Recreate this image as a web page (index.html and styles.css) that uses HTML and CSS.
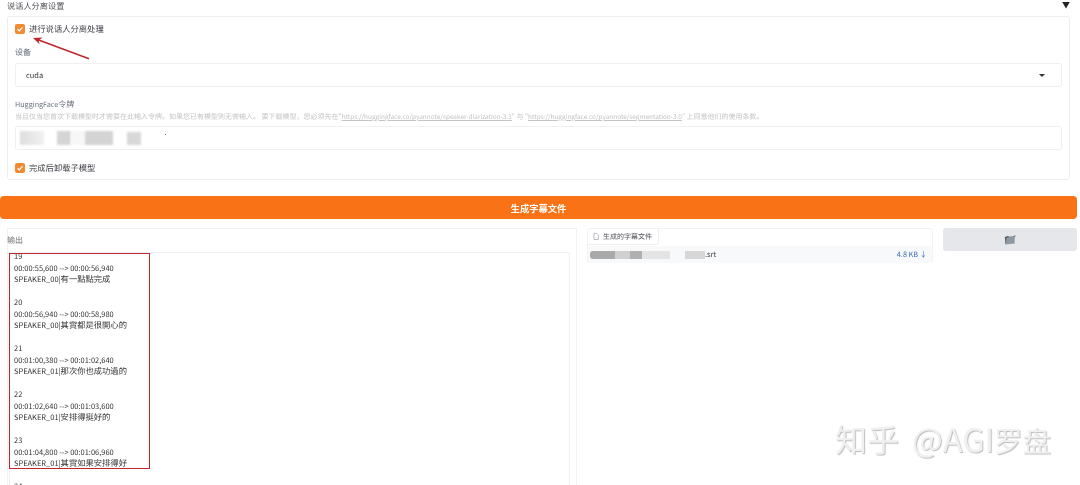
FILE: index.html
```html
<!DOCTYPE html>
<html lang="zh">
<head>
<meta charset="utf-8">
<title>生成字幕文件</title>
<link rel="stylesheet" href="styles.css">
</head>
<body>
<div class="page">
  <div class="acc-head"><span>说话人分离设置</span><span class="acc-arrow">▼</span></div>
  <section class="settings">
    <label class="check"><span class="box"><svg viewBox="0 0 10 10"><path d="M2.6 5.2 4.3 6.9 7.5 3.4"/></svg></span>进行说话人分离处理</label>
    <div class="field-label device-label">设备</div>
    <div class="select"><span class="lat">cuda</span><span class="caret"></span></div>
    <div class="field-label token-label"><span class="lat">HuggingFace</span>令牌</div>
    <div class="hint">当且仅当您首次下载模型时才需要在此输入令牌。如果您已有模型则无需输入。 要下载模型，您必须先在<span class="lat url">"<u>https://huggingface.co/pyannote/speaker-diarization-3.1</u>"</span> 与 <span class="lat url">"<u>https://huggingface.co/pyannote/segmentation-3.0</u>"</span> 上同意他们的使用条款。</div>
    <div class="token-input">
      <i class="m m1"></i><i class="m m2"></i><i class="m m3"></i><i class="m m4"></i><i class="m m5"></i><i class="dot"></i>
    </div>
    <label class="check check-last"><span class="box"><svg viewBox="0 0 10 10"><path d="M2.6 5.2 4.3 6.9 7.5 3.4"/></svg></span>完成后卸载子模型</label>
  </section>
  <button class="primary">生成字幕文件</button>
  <div class="columns">
    <section class="output">
      <div class="output-label">输出</div>
      <div class="textarea">
        <div class="cue first"><span class="lat">19<br>00:00:55,600 --&gt; 00:00:56,940<br>SPEAKER_00|</span>有一點點完成</div>
        <div class="cue"><span class="lat">20<br>00:00:56,940 --&gt; 00:00:58,980<br>SPEAKER_00|</span>其實都是很開心的</div>
        <div class="cue"><span class="lat">21<br>00:01:00,380 --&gt; 00:01:02,640<br>SPEAKER_01|</span>那次你也成功過的</div>
        <div class="cue"><span class="lat">22<br>00:01:02,640 --&gt; 00:01:03,600<br>SPEAKER_01|</span>安排得挺好的</div>
        <div class="cue"><span class="lat">23<br>00:01:04,800 --&gt; 00:01:06,960<br>SPEAKER_01|</span>其實如果安排得好</div>
        <div class="cue"><span class="lat">24</span></div>
      </div>
    </section>
    <section class="files">
      <div class="tab"><svg viewBox="0 0 10 10"><path d="M2.5 1.2H6L8 3.2V8.8H2.5Z"/></svg>生成的字幕文件</div>
      <div class="file-row">
        <span class="fname"><i class="f f1"></i><i class="f f2"></i><i class="f f3"></i><i class="f f4"></i><i class="f f5"></i><span class="lat">.srt</span></span>
        <span class="fsize">4.8 KB ↓</span>
      </div>
    </section>
    <button class="folder" aria-label="打开文件夹"><svg viewBox="0 0 14 12"><path class="front" d="M2.4 3.4 11.8 2.8 11.6 9.4 2.2 10.4Z"/><path class="back" d="M2.8 10.4 1.8 3 5 2 6 2.8 9.6 2.4 12.4 1.2 12.4 2.6 3.4 3.8Z"/></svg></button>
  </div>
  <div class="redbox"></div>
  <svg class="pointer" viewBox="0 0 62 27"><path class="line" d="M59 23.8 8 4.8"/><path class="head" d="M3 3 12.5 2.4 8.6 5.6 9.6 9.2Z"/></svg>
  <div class="mark"><span class="mark-a">知乎</span><span class="mark-b">@AGI</span><span class="mark-c">罗盘</span></div>
</div>
</body>
</html>
```
FILE: styles.css
```css
* { box-sizing: border-box; }
html, body { margin: 0; height: 485px; overflow: hidden; background: #fff; }
body { font-family: "Noto Sans CJK SC", "Noto Sans", sans-serif; color: #27272a; font-size: 8.3px; text-rendering: geometricPrecision; }
.lat { font-size: .9em; }
.url { font-size: .92em; }
.page { position: relative; height: 485px; overflow: hidden; filter: blur(.3px); }
.acc-head { display: flex; justify-content: space-between; height: 16px; padding: 0 10px 0 7px; line-height: 12px; font-size: 8.2px; color: #52525b; }
.acc-arrow { font-size: 8px; color: #222; }
.settings { margin: 0 10px 0 7px; height: 164px; padding: 7px 7px 0; border: 1px solid #eeeeef; border-radius: 3px; }
.check { display: flex; align-items: center; height: 10px; gap: 4px; font-size: 8.3px; color: #3f3f46; }
.box { width: 10px; height: 10px; border-radius: 2px; background: #f28a30; display: flex; }
.box svg { width: 10px; height: 10px; }
.box path { fill: none; stroke: #fff; stroke-width: 1.3; }
.field-label { font-size: 8px; color: #6b7280; line-height: 10px; }
.device-label { margin-top: 14px; }
.select { display: flex; justify-content: space-between; align-items: center; height: 24px; margin-top: 5px; padding: 0 16px 0 10px; border: 1px solid #f0f0f1; border-radius: 3px; font-size: 8.3px; color: #333; }
.caret { width: 0; height: 0; border: 3px solid transparent; border-top: 3px solid #333; border-bottom: 0; }
.token-label { margin-top: 13px; }
.hint { margin-top: 2px; font-size: 7px; line-height: 9px; color: #c4c4c8; white-space: nowrap; }
.token-input { display: flex; align-items: center; height: 24px; margin-top: 4px; padding-left: 4px; border: 1px solid #f0f0f1; border-radius: 2px; }
.m { display: block; height: 14px; filter: blur(1px); }
.m1 { width: 24px; background: linear-gradient(90deg,#dedee0,#f1f1f2); }
.m2 { width: 14px; background: #d5d5d6; margin-left: 13px; }
.m3 { width: 14px; background: #f7f7f7; }
.m4 { width: 28px; background: #d4d4d5; }
.m5 { width: 14px; height: 13px; background: #d8d8d9; margin-left: 14px; }
.dot { display: block; width: 1px; height: 1px; background: #777; margin: -8px 0 0 24px; }
.check-last { margin-top: 13px; }
.primary { display: block; width: 1077px; height: 23px; margin-top: 16px; border: 0; border-radius: 4px; background: #f97316; color: #fff; font: 700 9.3px "Noto Sans CJK SC", sans-serif; padding: 0; }
.columns { display: grid; grid-template-columns: 570px 346px 134px; column-gap: 10px; margin-top: 9px; padding-left: 7px; align-items: start; }
.output { height: 300px; border: 1px solid #f3f3f4; border-bottom: 0; padding: 0 6px 0 1px; }
.output-label { height: 23px; padding: 6px 0 0; font-size: 8px; line-height: 11px; color: #71717a; margin-left: -2px; }
.textarea { height: 280px; overflow: hidden; padding: 0 4px; border: 1px solid #f0f0f1; border-bottom: 0; border-radius: 3px 3px 0 0; font-size: 8.3px; line-height: 11.5px; color: #333; }
.cue { margin-bottom: 11.5px; }
.first { margin-top: -2px; }
.files { height: 35px; border: 1px solid #f2f2f3; border-radius: 3px; }
.tab { display: flex; align-items: center; width: 71px; height: 16px; gap: 3px; padding-left: 4px; border: 1px solid #f0f0f1; border-radius: 3px 0 3px 0; border-width: 0 1px 1px 0; font-size: 7px; color: #52525b; }
.tab svg { width: 8px; height: 9px; }
.tab path { fill: #fff; stroke: #9ca3af; stroke-width: .9; }
.file-row { display: flex; justify-content: space-between; align-items: center; height: 17px; margin-top: 1px; padding: 0 5px 0 2px; background: #f8f9fa; }
.fname { display: flex; align-items: center; font-size: 8.3px; color: #444; }
.f { display: block; height: 8px; filter: blur(.7px); }
.f1 { width: 25px; background: #a9a9aa; border-radius: 3px 0 0 3px; }
.f2 { width: 15px; background: #d0d0d1; }
.f3 { width: 12px; background: #b0b0b1; }
.f4 { width: 28px; background: #e4e4e5; }
.f5 { width: 20px; background: #d7d7d8; margin-left: 15px; }
.fsize { color: #3b6fb8; font-size: 7.3px; }
.folder { height: 23px; border: 0; border-radius: 3px; background: #e5e7eb; padding: 0; display: flex; align-items: center; justify-content: center; }
.folder svg { width: 14px; height: 12px; }
.back { fill: #4b5763; }
.front { fill: #8d98a3; }
.redbox { position: absolute; left: 9px; top: 253px; width: 141px; height: 216px; border: 1px solid #c0272d; }
.pointer { position: absolute; left: 30px; top: 35px; width: 62px; height: 27px; }
.line { fill: none; stroke: #c0272d; stroke-width: 1.5; }
.head { fill: #c0272d; }
.mark { position: absolute; left: 835px; top: 417px; line-height: 44px; white-space: nowrap; color: #f0f0f0; text-shadow: 1px 1px 1px #bdbdbd; }
.mark-a { font-size: 32px; }
.mark-b { font-size: 32.5px; margin-left: 13px; }
.mark-c { font-size: 28.5px; }
```
